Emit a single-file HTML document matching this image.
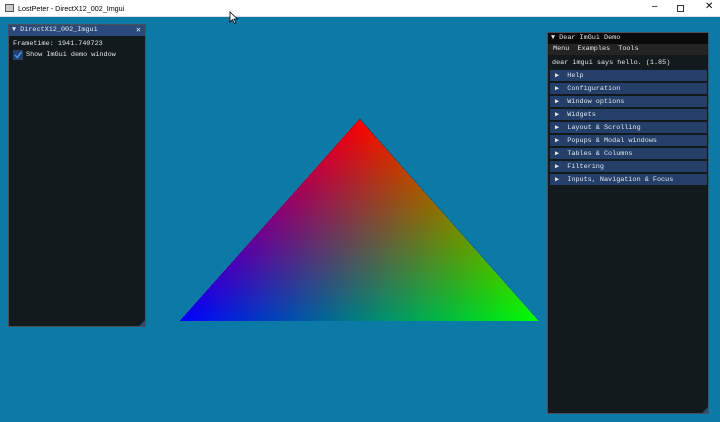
<!DOCTYPE html>
<html><head><meta charset="utf-8"><style>
*{margin:0;padding:0;box-sizing:border-box}
body{width:720px;height:422px;overflow:hidden;background:#0b7aa7;position:relative;font-family:"Liberation Mono",monospace;font-size:6.8px;color:#e6e6e6}
.tb{position:absolute;left:0;top:0;width:720px;height:17px;background:#fff;color:#000;font-family:"Liberation Sans",sans-serif;font-size:7.2px;border-bottom:1px solid #ddd}
.win{position:absolute;background:#131a1d;border:1px solid #4a4f5a}
.t{position:absolute;white-space:pre}
.hdr{position:absolute;left:2px;width:157px;height:11px;background:#24406a}
.hdr span{position:absolute;left:5px;top:1px;white-space:pre}
.grip{position:absolute;right:0;bottom:0;width:0;height:0;border-left:6px solid transparent;border-bottom:6px solid #2b4a6c}
</style></head><body>
<div class="tb">
<div style="position:absolute;left:5px;top:4px;width:9px;height:8px;border:1px solid #555;background:#ccc"></div>
<div class="t" style="left:18px;top:4px">LostPeter - DirectX12_002_Imgui</div>
<div class="t" style="left:652px;top:1px;font-size:10px">–</div>
<div style="position:absolute;left:677px;top:5px;width:7px;height:7px;border:1px solid #333"></div>
<div class="t" style="left:705px;top:1px;font-size:10px">✕</div>
</div>
<svg style="position:absolute;left:229px;top:11px" width="10" height="14"><path d="M1 1 L1 11 L3.5 8.5 L5.5 12.5 L7 11.8 L5 8 L8.5 8 Z" fill="#fff" stroke="#000" stroke-width="0.8"/></svg>

<svg style="position:absolute;left:0;top:0" width="720" height="422">
<defs>
<linearGradient id="r" gradientUnits="userSpaceOnUse" x1="360" y1="119" x2="360" y2="321"><stop offset="0" stop-color="#f00"/><stop offset="1" stop-color="#000"/></linearGradient>
<linearGradient id="g" gradientUnits="userSpaceOnUse" x1="539" y1="321" x2="338.9" y2="142.7"><stop offset="0" stop-color="#0f0"/><stop offset="1" stop-color="#000"/></linearGradient>
<linearGradient id="b" gradientUnits="userSpaceOnUse" x1="180" y1="321" x2="381.1" y2="142.8"><stop offset="0" stop-color="#00f"/><stop offset="1" stop-color="#000"/></linearGradient>
</defs>
<g style="isolation:isolate">
<polygon points="360,119 180,321 539,321" fill="#000"/>
<polygon points="360,119 180,321 539,321" fill="url(#r)" style="mix-blend-mode:plus-lighter"/>
<polygon points="360,119 180,321 539,321" fill="url(#g)" style="mix-blend-mode:plus-lighter"/>
<polygon points="360,119 180,321 539,321" fill="url(#b)" style="mix-blend-mode:plus-lighter"/>
</g>
</svg>

<div class="win" style="left:8px;top:24px;width:138px;height:303px">
<div style="position:absolute;left:0;top:0;width:136px;height:11px;background:#294a7a"></div>
<div class="t" style="left:3px;top:1px">▼ DirectX12_002_Imgui</div>
<div class="t" style="left:127px;top:0px;font-size:8px">✕</div>
<div class="t" style="left:4px;top:15px">Frametime: 1941.740723</div>
<div style="position:absolute;left:4px;top:25px;width:10px;height:10px;background:#24406a"></div>
<svg style="position:absolute;left:4px;top:25px" width="10" height="10"><path d="M2 5 L4.2 7.5 L8.5 2" fill="none" stroke="#4296fa" stroke-width="1.5"/></svg>
<div class="t" style="left:17px;top:26px">Show ImGui demo window</div>
<div class="grip"></div>
</div>

<div class="win" style="left:547px;top:32px;width:162px;height:382px">
<div style="position:absolute;left:0;top:0;width:160px;height:11px;background:#0a0a0a"></div>
<div class="t" style="left:3px;top:1px">▼ Dear ImGui Demo</div>
<div style="position:absolute;left:0;top:11px;width:160px;height:11px;background:#242424"></div>
<div class="t" style="left:5px;top:12px">Menu  Examples  Tools</div>
<div class="t" style="left:4px;top:26px">dear imgui says hello. (1.85)</div>
<div class="hdr" style="top:37px"><span>▶  Help</span></div>
<div class="hdr" style="top:50px"><span>▶  Configuration</span></div>
<div class="hdr" style="top:63px"><span>▶  Window options</span></div>
<div class="hdr" style="top:76px"><span>▶  Widgets</span></div>
<div class="hdr" style="top:89px"><span>▶  Layout &amp; Scrolling</span></div>
<div class="hdr" style="top:102px"><span>▶  Popups &amp; Modal windows</span></div>
<div class="hdr" style="top:115px"><span>▶  Tables &amp; Columns</span></div>
<div class="hdr" style="top:128px"><span>▶  Filtering</span></div>
<div class="hdr" style="top:141px"><span>▶  Inputs, Navigation &amp; Focus</span></div>
<div class="grip"></div>
</div>
</body></html>
